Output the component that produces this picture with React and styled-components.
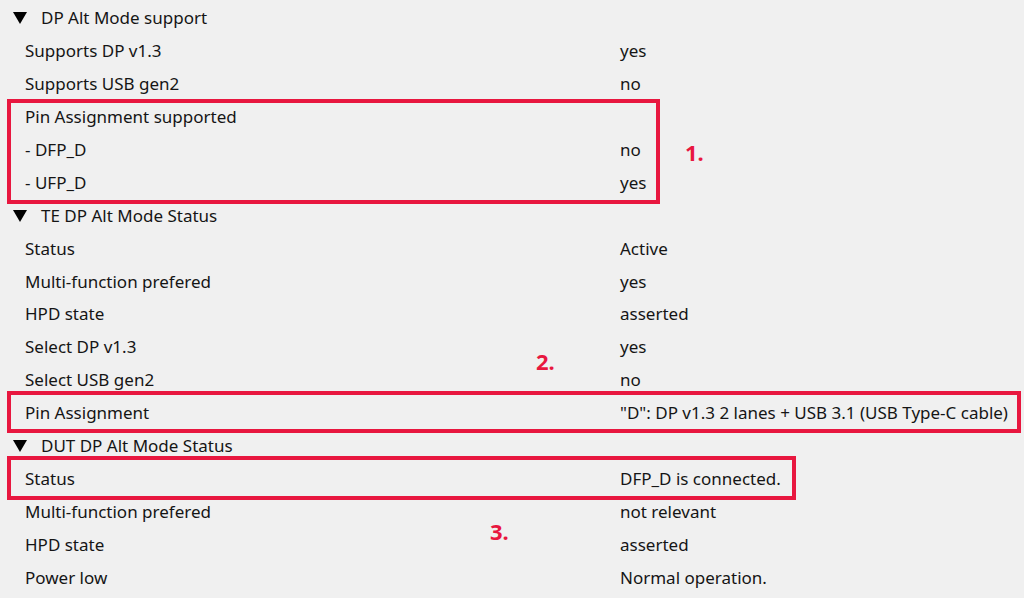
import React from "react";
import styled, { createGlobalStyle } from "styled-components";

const Global = createGlobalStyle`
  html, body { margin: 0; padding: 0; background: #f0f0f0; }
  body { font-family: "Noto Sans", "Open Sans", sans-serif; color: #151515; }
`;

const RED = "#e8173f";

const Page = styled.div`
  position: relative;
  width: 1024px;
  height: 598px;
  overflow: hidden;
  padding-top: 1.5px;
  box-sizing: border-box;
  background: #f0f0f0;
`;

const ROW_H = 32.9;

const Header = styled.div`
  display: flex;
  align-items: center;
  height: ${ROW_H}px;
  font-size: 17px;
  padding-left: 13px;
`;

const Caret = styled.span`
  width: 0;
  height: 0;
  border-left: 7px solid transparent;
  border-right: 7px solid transparent;
  border-top: 12px solid #000;
  margin-right: 14px;
  margin-top: 1px;
`;

const Row = styled.div`
  display: grid;
  grid-template-columns: 620px 1fr;
  align-items: center;
  height: ${ROW_H}px;
  font-size: 17px;
  white-space: nowrap;
`;

const Label = styled.span`
  padding-left: 25px;
`;

const Value = styled.span``;

const Highlight = styled.div`
  position: relative;
  &::after {
    content: "";
    position: absolute;
    left: 7px;
    width: ${(p) => p.$w}px;
    top: ${(p) => p.$top}px;
    bottom: ${(p) => p.$bottom}px;
    border: 4px solid ${RED};
    box-sizing: border-box;
    pointer-events: none;
  }
`;

const Marker = styled.span`
  position: absolute;
  left: ${(p) => p.$x}px;
  top: ${(p) => p.$y}px;
  color: ${RED};
  font-weight: 700;
  font-size: 22px;
  line-height: 22px;
`;

const Section = ({ title }) => (
  <Header>
    <Caret />
    {title}
  </Header>
);

const Item = ({ label, value }) => (
  <Row>
    <Label>{label}</Label>
    <Value>{value}</Value>
  </Row>
);

export default function App() {
  return (
    <>
      <Global />
      <Page>
        <Section title="DP Alt Mode support" />
        <Item label="Supports DP v1.3" value="yes" />
        <Item label="Supports USB gen2" value="no" />
        <Highlight $w={653} $top={-1.2} $bottom={-5}>
          <Item label="Pin Assignment supported" value="" />
          <Item label="- DFP_D" value="no" />
          <Item label="- UFP_D" value="yes" />
        </Highlight>
        <Section title="TE DP Alt Mode Status" />
        <Item label="Status" value="Active" />
        <Item label="Multi-function prefered" value="yes" />
        <Item label="HPD state" value="asserted" />
        <Item label="Select DP v1.3" value="yes" />
        <Item label="Select USB gen2" value="no" />
        <Highlight $w={1014} $top={-5} $bottom={-4}>
          <Item
            label="Pin Assignment"
            value={'"D": DP v1.3 2 lanes + USB 3.1 (USB Type-C cable)'}
          />
        </Highlight>
        <Section title="DUT DP Alt Mode Status" />
        <Highlight $w={789} $top={-6} $bottom={-5}>
          <Item label="Status" value="DFP_D is connected." />
        </Highlight>
        <Item label="Multi-function prefered" value="not relevant" />
        <Item label="HPD state" value="asserted" />
        <Item label="Power low" value="Normal operation." />
        <Marker $x={685} $y={141}>1.</Marker>
        <Marker $x={536} $y={350}>2.</Marker>
        <Marker $x={490} $y={520}>3.</Marker>
      </Page>
    </>
  );
}
